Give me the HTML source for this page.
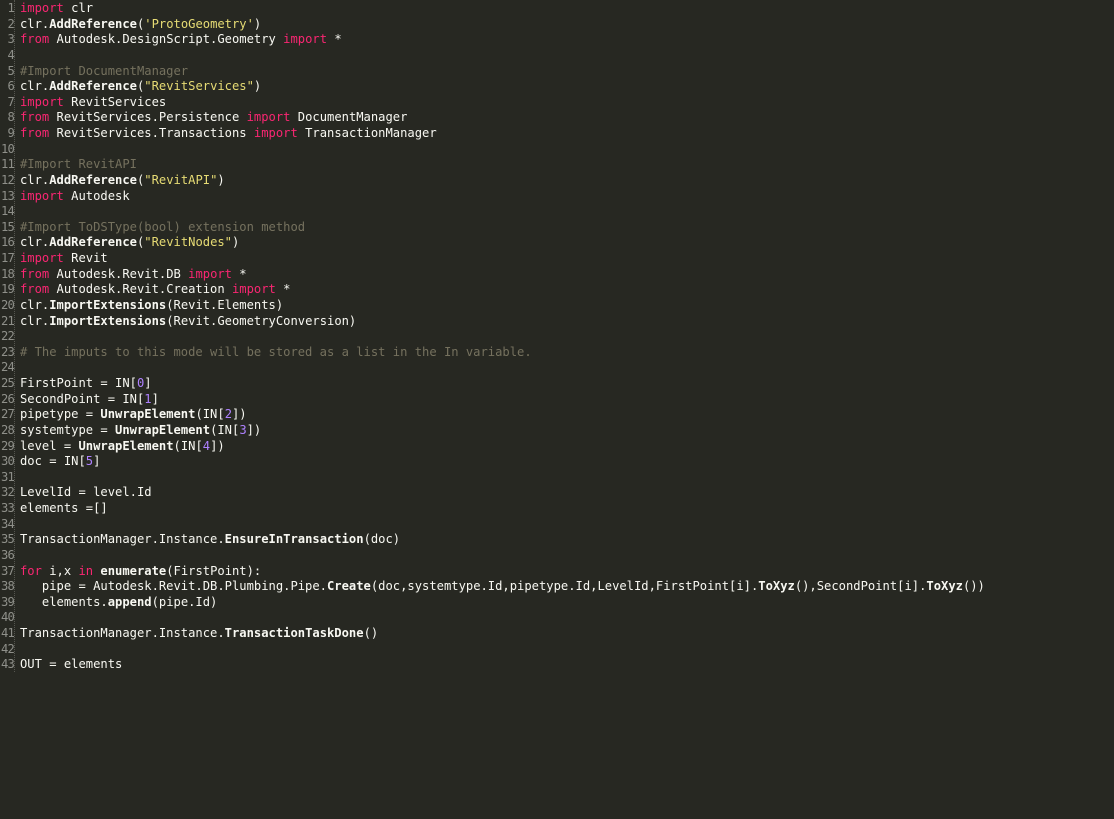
<!DOCTYPE html>
<html><head><meta charset="utf-8"><style>
html,body{margin:0;padding:0;background:#272822;width:1114px;height:819px;overflow:hidden}
.w{position:absolute;left:0;top:1px;font-family:"DejaVu Sans Mono","Liberation Mono",monospace;font-size:12.15px;line-height:15.62px;color:#f8f8f2;white-space:pre}
.g{position:absolute;left:0;top:1px;width:14px;text-align:right;color:#8f908a;font-family:"DejaVu Sans Mono","Liberation Mono",monospace;font-size:12.15px;line-height:15.62px;white-space:pre;letter-spacing:-0.8px}
.sep{position:absolute;left:14px;top:0;height:672px;border-left:1px dotted #55564f}
.c{position:absolute;left:20px}
.k{color:#f92672}.s{color:#e6db74}.n{color:#ae81ff}.m{color:#75715e}.f{font-weight:bold}
</style></head><body>
<div class="g">1
2
3
4
5
6
7
8
9
10
11
12
13
14
15
16
17
18
19
20
21
22
23
24
25
26
27
28
29
30
31
32
33
34
35
36
37
38
39
40
41
42
43</div>
<div class="sep"></div>
<div class="w c"><span class="k">import</span> clr
clr.<span class="f">AddReference</span>(<span class="s">'ProtoGeometry'</span>)
<span class="k">from</span> Autodesk.DesignScript.Geometry <span class="k">import</span> *

<span class="m">#Import DocumentManager</span>
clr.<span class="f">AddReference</span>(<span class="s">"RevitServices"</span>)
<span class="k">import</span> RevitServices
<span class="k">from</span> RevitServices.Persistence <span class="k">import</span> DocumentManager
<span class="k">from</span> RevitServices.Transactions <span class="k">import</span> TransactionManager

<span class="m">#Import RevitAPI</span>
clr.<span class="f">AddReference</span>(<span class="s">"RevitAPI"</span>)
<span class="k">import</span> Autodesk

<span class="m">#Import ToDSType(bool) extension method</span>
clr.<span class="f">AddReference</span>(<span class="s">"RevitNodes"</span>)
<span class="k">import</span> Revit
<span class="k">from</span> Autodesk.Revit.DB <span class="k">import</span> *
<span class="k">from</span> Autodesk.Revit.Creation <span class="k">import</span> *
clr.<span class="f">ImportExtensions</span>(Revit.Elements)
clr.<span class="f">ImportExtensions</span>(Revit.GeometryConversion)

<span class="m"># The imputs to this mode will be stored as a list in the In variable.</span>

FirstPoint = IN[<span class="n">0</span>]
SecondPoint = IN[<span class="n">1</span>]
pipetype = <span class="f">UnwrapElement</span>(IN[<span class="n">2</span>])
systemtype = <span class="f">UnwrapElement</span>(IN[<span class="n">3</span>])
level = <span class="f">UnwrapElement</span>(IN[<span class="n">4</span>])
doc = IN[<span class="n">5</span>]

LevelId = level.Id
elements =[]

TransactionManager.Instance.<span class="f">EnsureInTransaction</span>(doc)

<span class="k">for</span> i,x <span class="k">in</span> <span class="f">enumerate</span>(FirstPoint):
   pipe = Autodesk.Revit.DB.Plumbing.Pipe.<span class="f">Create</span>(doc,systemtype.Id,pipetype.Id,LevelId,FirstPoint[i].<span class="f">ToXyz</span>(),SecondPoint[i].<span class="f">ToXyz</span>())
   elements.<span class="f">append</span>(pipe.Id)

TransactionManager.Instance.<span class="f">TransactionTaskDone</span>()

OUT = elements</div>
</body></html>
